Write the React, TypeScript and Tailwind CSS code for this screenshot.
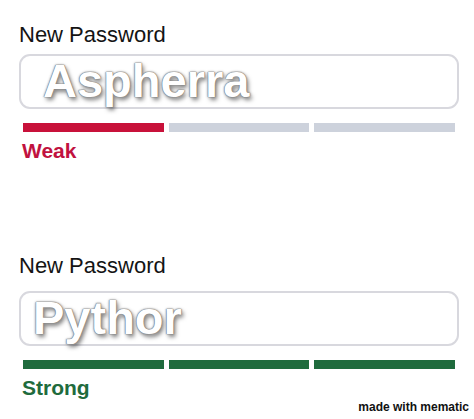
const memeText =
  '[text-shadow:0_0_1px_#7a7a7a,0_0_1px_#7a7a7a,0_0_1px_#7a7a7a,0_0_3px_#a0a0a0,2px_3px_4px_rgba(0,0,0,0.5)]';

interface StrengthProps {
  value: string;
  level: 'weak' | 'strong';
  labelGap: string;
  textPad: string;
}

function PasswordField({ value, level, labelGap, textPad }: StrengthProps) {
  const strong = level === 'strong';
  const fill = strong ? 'bg-[#1f6b3d]' : 'bg-[#c8113a]';
  const bars = strong ? [fill, fill, fill] : [fill, 'bg-[#cdd2dc]', 'bg-[#cdd2dc]'];

  return (
    <div className="w-[440px]">
      <div className="text-[22px] leading-[24px] text-[#141414]">New Password</div>
      <div
        className={`${labelGap} h-[55px] w-[440px] rounded-[11px] border-2 border-[#d8d8de] bg-white ${textPad} pt-[2px]`}
      >
        <span className={`text-[47px] leading-[46px] font-bold text-white ${memeText}`}>{value}</span>
      </div>
      <div className="mt-[14px] flex gap-[5px] px-[4px]">
        {bars.map((c, i) => (
          <div key={i} className={`h-[9px] flex-1 ${c}`} />
        ))}
      </div>
      <div
        className={`mt-[7px] pl-[3px] text-[21px] leading-[24px] font-bold ${
          strong ? 'text-[#1f6b3d]' : 'text-[#c1123f]'
        }`}
      >
        {strong ? 'Strong' : 'Weak'}
      </div>
    </div>
  );
}

export default function App() {
  return (
    <div className="relative h-[419px] w-[474px] overflow-hidden bg-white pl-[19px] pt-[23px] font-['Liberation_Sans',Arial,sans-serif]">
      <PasswordField value="Aspherra" level="weak" labelGap="mt-[7px]" textPad="pl-[22px]" />
      <div className="mt-[91px]">
        <PasswordField value="Pythor" level="strong" labelGap="mt-[13px]" textPad="pl-[12px]" />
      </div>
      <div className="absolute bottom-[5px] right-[5px] text-[12px] leading-[14px] font-bold text-[#111]">
        made with mematic
      </div>
    </div>
  );
}
